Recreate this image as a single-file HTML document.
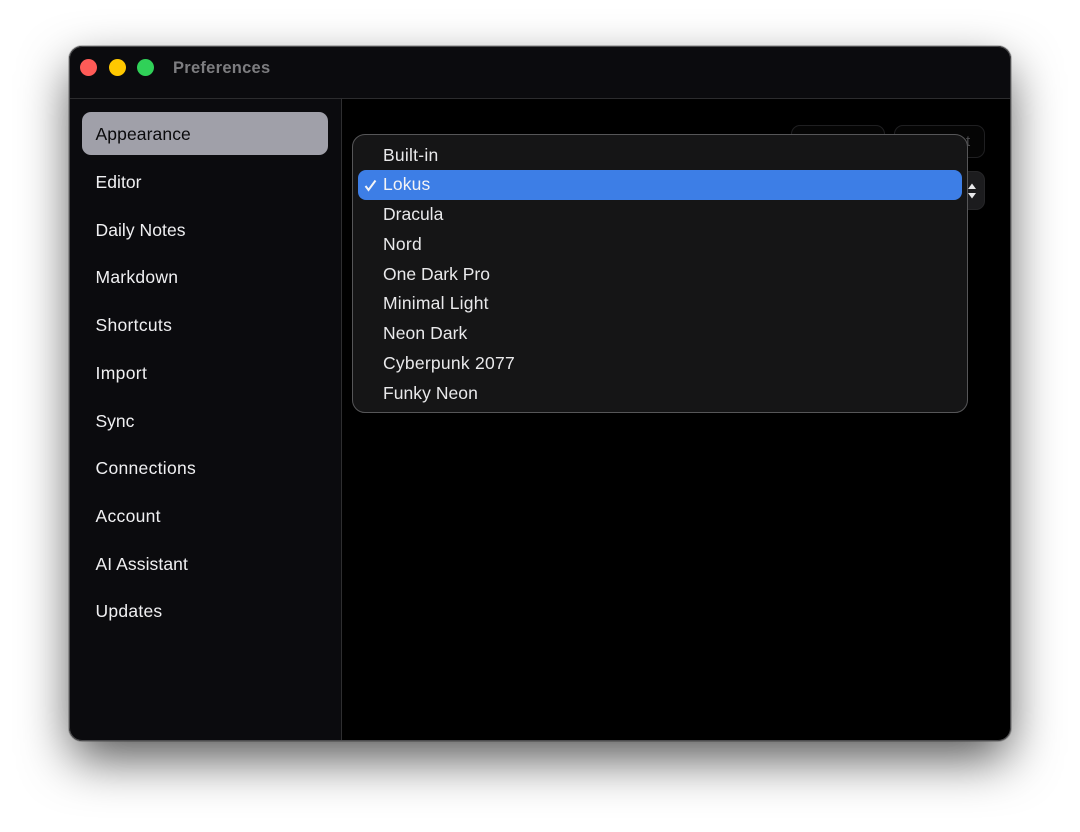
<!DOCTYPE html>
<html><head><meta charset="utf-8"><style>
*{box-sizing:border-box}
html,body{margin:0;padding:0;width:1080px;height:832px;background:#fff;overflow:hidden;font-family:"Liberation Sans",sans-serif}
.shadow{position:absolute;left:69px;top:46px;width:942px;height:695px;border-radius:13px;box-shadow:0 0 0 1px rgba(0,0,0,.22),0 20px 50px -3px rgba(0,0,0,.68)}
.win{position:absolute;left:69px;top:46px;width:942px;height:695px;border-radius:13px;background:#000;overflow:hidden}
.win:after{content:"";position:absolute;inset:0;border-radius:13px;border:1.5px solid #4c4c4e;pointer-events:none}
.bar{position:absolute;left:0;top:0;width:942px;height:53px;background:#0b0b0e;border-bottom:1px solid #2c2c2e}
.dot{position:absolute;top:13px;width:17px;height:17px;border-radius:50%}
.title{position:absolute;left:104px;top:13px;font-size:16.5px;line-height:19px;font-weight:bold;color:#7d7d80;letter-spacing:.27px}
.side{position:absolute;left:0;top:53px;width:273px;height:642px;background:#0b0b0e;border-right:1px solid #2e2e30}
.sel{position:absolute;left:13px;top:13px;width:246px;height:43px;border-radius:9px;background:#a0a0a9}
.si{position:absolute;left:26.5px;font-size:17.5px;line-height:20px;color:#f0f0f2;white-space:nowrap}
.btn{position:absolute;border:1px solid #1f1f21;border-radius:9px;background:#050505}
.menu{position:absolute;left:283px;top:88px;width:616px;height:279px;border-radius:13px;background:#151516;border:1px solid #565658}
.hl{position:absolute;left:5px;top:35px;width:604px;height:29.5px;border-radius:8px;background:#3d7ee6}
.mi{position:absolute;left:30px;font-size:17.5px;line-height:20px;color:#e9e9eb;white-space:nowrap}
</style></head><body>
<div class="shadow"></div>
<div class="win">
<div class="bar">
<div class="dot" style="left:11px;background:#ff5b57"></div>
<div class="dot" style="left:40px;background:#ffc800"></div>
<div class="dot" style="left:68px;background:#30d158"></div>
<div class="title">Preferences</div>
</div>
<div class="side">
<div class="sel"></div>
<div class="si" style="top:25px;color:#0a0a0c;letter-spacing:.1px">Appearance</div>
<div class="si" style="top:73px;letter-spacing:.05px">Editor</div>
<div class="si" style="top:121px;letter-spacing:.05px">Daily Notes</div>
<div class="si" style="top:168px;letter-spacing:.25px">Markdown</div>
<div class="si" style="top:216px;letter-spacing:.3px">Shortcuts</div>
<div class="si" style="top:264px;letter-spacing:.35px">Import</div>
<div class="si" style="top:312px">Sync</div>
<div class="si" style="top:359px;letter-spacing:.3px">Connections</div>
<div class="si" style="top:407px;letter-spacing:.3px">Account</div>
<div class="si" style="top:455px;letter-spacing:.08px">AI Assistant</div>
<div class="si" style="top:502px;letter-spacing:.25px">Updates</div>
</div>
<div class="btn" style="left:722px;top:79px;width:94px;height:33px"></div>
<div class="btn" style="left:825px;top:79px;width:91px;height:33px"></div>
<div style="position:absolute;left:897px;top:87px;font-size:15px;line-height:18px;color:#4a4a4c">t</div>
<div class="btn" style="left:860px;top:125px;width:56px;height:39px;background:#1c1c1e;border-color:#262628"></div>
<svg style="position:absolute;left:898px;top:136px" width="10" height="18" viewBox="0 0 10 18"><path d="M5 1.5L9 7H1Z M5 16.5L1 11H9Z" fill="#e8e8ea"/></svg>
<div class="menu">
<div class="hl"></div>
<svg style="position:absolute;left:11px;top:43px" width="14" height="14" viewBox="0 0 14 14"><path d="M1.5 8L4.5 12L11.5 2.5" fill="none" stroke="#f4f4f6" stroke-width="2"/></svg>
<div class="mi" style="top:10px;letter-spacing:.25px">Built-in</div>
<div class="mi" style="top:39px;color:#f4f4f6;letter-spacing:.15px">Lokus</div>
<div class="mi" style="top:69px">Dracula</div>
<div class="mi" style="top:99px;letter-spacing:.25px">Nord</div>
<div class="mi" style="top:129px">One Dark Pro</div>
<div class="mi" style="top:158px;letter-spacing:.2px">Minimal Light</div>
<div class="mi" style="top:188px;letter-spacing:.08px">Neon Dark</div>
<div class="mi" style="top:218px;letter-spacing:.25px">Cyberpunk 2077</div>
<div class="mi" style="top:248px;letter-spacing:.05px">Funky Neon</div>
</div>
</div>
</body></html>
